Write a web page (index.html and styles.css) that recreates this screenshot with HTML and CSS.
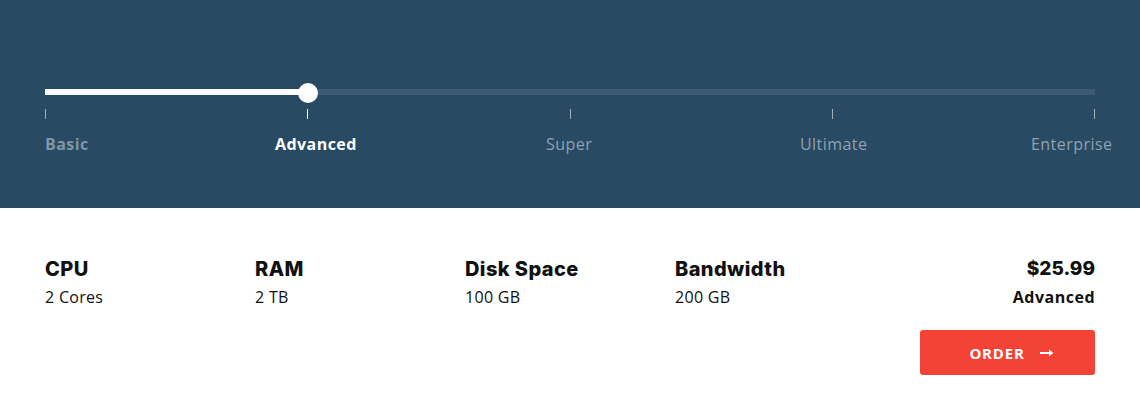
FILE: index.html
```html
<!DOCTYPE html>
<html>
<head>
<meta charset="utf-8">
<link rel="stylesheet" href="styles.css">
</head>
<body>
<section class="hero">
  <div class="slider">
    <div class="track">
      <div class="fill" style="width:25%"></div>
      <div class="thumb" style="left:25%"></div>
    </div>
    <div class="ticks">
      <span class="tick"></span><span class="tick"></span><span class="tick"></span><span class="tick"></span><span class="tick"></span>
    </div>
    <div class="labels">
      <span class="label strong" style="left:0px">Basic</span>
      <span class="label active" style="left:230px">Advanced</span>
      <span class="label" style="left:501px">Super</span>
      <span class="label" style="left:755px">Ultimate</span>
      <span class="label" style="left:986px">Enterprise</span>
    </div>
  </div>
</section>
<section class="plan">
  <div class="specs">
    <div class="spec"><h3>CPU</h3><p>2 Cores</p></div>
    <div class="spec"><h3>RAM</h3><p>2 TB</p></div>
    <div class="spec"><h3>Disk Space</h3><p>100 GB</p></div>
    <div class="spec"><h3>Bandwidth</h3><p>200 GB</p></div>
  </div>
  <div class="price">
    <h3>$25.99</h3>
    <p class="tier">Advanced</p>
    <a class="order" href="#">ORDER
      <svg width="14" height="8" viewBox="0 0 14 8"><path d="M0 4H11" stroke="#fff" stroke-width="2"/><path d="M9 0.5L13.5 4L9 7.5Z" fill="#fff"/></svg>
    </a>
  </div>
</section>
</body>
</html>
```
FILE: styles.css
```css
* { box-sizing: border-box; }
body {
  margin: 0;
  background: #fff;
  font-family: "Open Sans", "DejaVu Sans", sans-serif;
}
.hero {
  background: #284a63;
  height: 208px;
  padding: 0 45px;
}
.slider {
  padding-top: 89px;
}
.track {
  position: relative;
  height: 6px;
  background: #3d5b73;
}
.fill {
  height: 100%;
  background: #fff;
}
.thumb {
  position: absolute;
  top: 50%;
  width: 20px;
  height: 20px;
  margin-left: -10px;
  margin-top: -9px;
  border-radius: 50%;
  background: #fff;
}
.ticks {
  display: flex;
  justify-content: space-between;
  margin-top: 14px;
  height: 10px;
}
.tick {
  width: 1px;
  height: 10px;
  background: #a3b2bf;
}
.tick:nth-child(2) { background: #fff; }
.labels {
  position: relative;
  margin-top: 15px;
  height: 20px;
}
.label {
  position: absolute;
  top: 0;
  font-size: 16px;
  line-height: 20px;
  color: #8ea2b2;
  letter-spacing: 0.45px;
  white-space: nowrap;
}
.label.strong { font-weight: 700; color: #7f95a6; }
.label.active { font-weight: 700; color: #fff; }
.plan {
  display: flex;
  justify-content: space-between;
  padding: 49px 45px 0;
}
.specs {
  display: grid;
  grid-template-columns: repeat(4, 210px);
}
.spec h3, .price h3 {
  margin: 0;
  font-family: "Inter", "Liberation Sans", sans-serif;
  font-weight: 800;
  font-size: 20px;
  line-height: 24px;
  letter-spacing: 0.4px;
  color: #111;
}
.price h3 { font-size: 19px; letter-spacing: 0; }
.spec p {
  margin: 6px 0 0;
  font-size: 16px;
  line-height: 20px;
  letter-spacing: 0.3px;
  color: #111;
}
.price {
  display: flex;
  flex-direction: column;
  align-items: flex-end;
}
.tier {
  margin: 6px 0 0;
  font-size: 16px;
  line-height: 20px;
  font-weight: 700;
  letter-spacing: 0.5px;
  color: #111;
}
.order {
  margin-top: 23px;
  width: 175px;
  height: 45px;
  display: flex;
  align-items: center;
  justify-content: center;
  gap: 15px;
  background: #f44336;
  border-radius: 3px;
  color: #fff;
  font-weight: 700;
  font-size: 15px;
  letter-spacing: 0.8px;
  text-decoration: none;
  padding-left: 8px;
}
```
